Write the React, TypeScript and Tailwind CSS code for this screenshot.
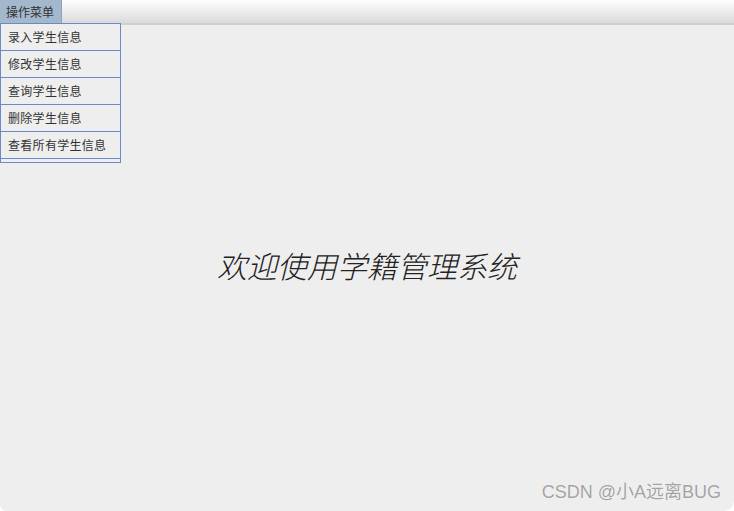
import React from "react";

const items = ["录入学生信息", "修改学生信息", "查询学生信息", "删除学生信息", "查看所有学生信息"];

export default function App() {
  const cjk = { fontFamily: '"Noto Sans CJK SC", "Liberation Sans", sans-serif' };
  return (
    <div className="w-[734px] h-[511px] bg-white overflow-hidden" style={cjk}>
      <div className="relative w-full h-full bg-[#eeeeee] rounded-bl-[6px] rounded-br-[10px] flex flex-col">
        <div className="h-[23px] bg-gradient-to-b from-[#ffffff] to-[#dadada] flex border-b-2 border-[#cfcfcf] box-content">
          <div className="w-[62px] h-[23px] bg-[#a3b8cc] text-[12px] leading-[23px] text-[#333333] pl-[6px] border-r border-[#8fa3b8]">
            操作菜单
          </div>
        </div>
        <div className="flex-1 flex items-center justify-center">
          <div className="text-[30px] italic font-light text-[#222222] mt-[-6px]">欢迎使用学籍管理系统</div>
        </div>
        <div className="absolute left-0 top-[23px] w-[121px] border border-[#6a89c8] bg-[#eeeeee] pb-[3px]">
          {items.map((t) => (
            <div key={t} className="h-[27px] border-b border-[#6a89c8] text-[12px] leading-[26px] text-[#333333] pl-[7px] tracking-[0.3px]">
              {t}
            </div>
          ))}
        </div>
        <div className="absolute right-[13px] bottom-[5px] text-[18px] text-[#a3a3a3]" style={{ fontFamily: '"Liberation Sans", "Noto Sans CJK SC", sans-serif', textShadow: "0 0 1px #ffffff" }}>
          CSDN @小A远离BUG
        </div>
      </div>
    </div>
  );
}
